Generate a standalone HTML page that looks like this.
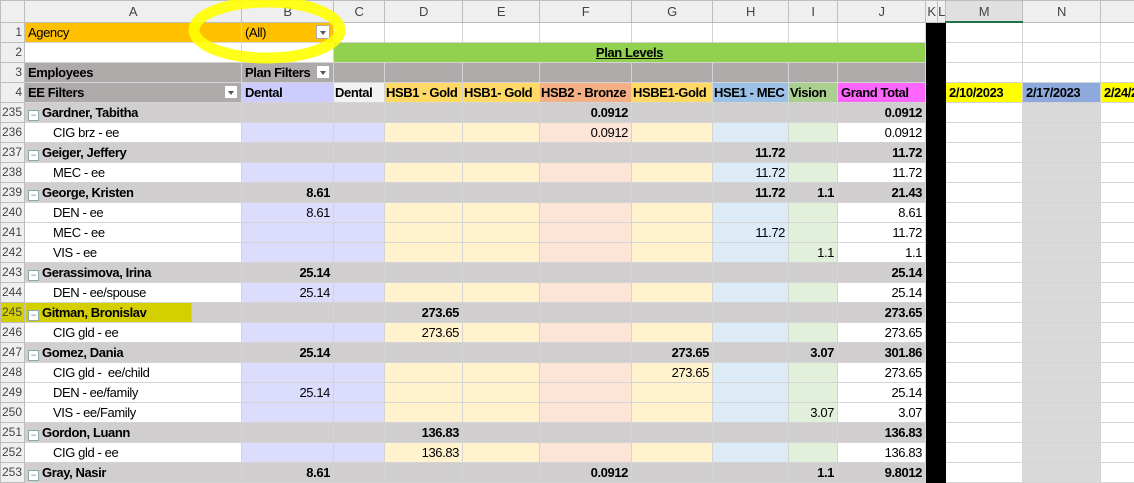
<!DOCTYPE html>
<html><head><meta charset="utf-8"><style>
body{margin:0;width:1134px;height:478px;overflow:hidden;background:#fff;font-family:"Liberation Sans",Arial,sans-serif;font-size:13px;letter-spacing:-0.4px;color:#000;position:relative}
table{border-collapse:collapse;table-layout:fixed;width:1160px;position:absolute;left:0;top:0}
td{border:1px solid #d4d4d4;height:19px;padding:0 3px;white-space:nowrap;overflow:hidden;text-align:right;line-height:19px}
tr.h td{background:#efefef;color:#444;text-align:center;height:20px;font-weight:normal;border-color:#bdbdbd}
td.rh{background:#efefef;color:#444;text-align:right;padding:0 2px 0 0;font-size:12px;border-color:#bdbdbd;letter-spacing:0}
.b{font-weight:bold}
.l{text-align:left}
.c{text-align:center}
tr.g td{background:#d0cece;font-weight:bold}
tr.g td.rh{background:#efefef;font-weight:normal}
tr.g td.w{background:#fff}
tr.g td.n,td.n{background:#d9d9d9}
td.lv{background:#dcdcfc}td.yl{background:#fff2cc}td.pc{background:#fce4d6}td.bu{background:#ddebf7}td.gr{background:#e2efda}
td.K{background:#000!important;border-color:#000}
.m{display:inline-block;width:9px;height:9px;border:1px solid #8aa;background:#fff;font-size:9px;line-height:8px;text-align:center;color:#567;margin-right:3px;vertical-align:-1px;font-weight:normal;letter-spacing:0}
.dd{position:absolute;width:14px;height:14px;background:#fff;border:1px solid #aaa;box-sizing:border-box}
.dd:after{content:"";position:absolute;left:3px;top:5px;border:3px solid transparent;border-top:4px solid #555}
</style></head><body>
<table>
<colgroup><col style="width:24px"><col style="width:217px"><col style="width:92px"><col style="width:51px"><col style="width:78px"><col style="width:77px"><col style="width:92px"><col style="width:81px"><col style="width:76px"><col style="width:49px"><col style="width:88px"><col style="width:12px"><col style="width:8px"><col style="width:77px"><col style="width:78px"><col style="width:60px"></colgroup>
<tr class="h"><td></td><td>A</td><td>B</td><td>C</td><td>D</td><td>E</td><td>F</td><td>G</td><td>H</td><td>I</td><td>J</td><td style="padding:0">K</td><td style="padding:0">L</td><td style="border-bottom:2px solid #217346;background:#e0e0e0">M</td><td>N</td><td></td></tr>
<tr><td class="rh">1</td><td class="l" style="background:#ffc000">Agency</td><td class="l" style="background:#ffc000">(All)</td><td></td><td></td><td></td><td></td><td></td><td></td><td></td><td></td><td class="K"></td><td class="K"></td><td></td><td></td><td></td></tr>
<tr><td class="rh">2</td><td></td><td></td><td colspan="8" class="c b" style="background:#92d050;text-decoration:underline">Plan Levels</td><td class="K"></td><td class="K"></td><td></td><td></td><td></td></tr>
<tr><td class="rh">3</td><td class="l b" style="background:#aeaaaa">Employees</td><td class="l b" style="background:#aeaaaa">Plan Filters</td><td style="background:#aeaaaa"></td><td style="background:#aeaaaa"></td><td style="background:#aeaaaa"></td><td style="background:#aeaaaa"></td><td style="background:#aeaaaa"></td><td style="background:#aeaaaa"></td><td style="background:#aeaaaa"></td><td style="background:#aeaaaa"></td><td class="K"></td><td class="K"></td><td></td><td></td><td></td></tr>
<tr class="b"><td class="rh" style="font-weight:normal">4</td><td class="l" style="background:#aeaaaa">EE Filters</td><td class="l" style="background:#ccccff">Dental</td><td class="l" style="background:#f2f2f2;padding:0 1px">Dental</td><td class="l" style="background:#ffd966;padding:0 1px">HSB1 - Gold</td><td class="l" style="background:#ffd966;padding:0 1px">HSB1- Gold</td><td class="l" style="background:#f4b084;padding:0 1px">HSB2 - Bronze</td><td class="l" style="background:#ffd966;padding:0 1px">HSBE1-Gold</td><td class="l" style="background:#9bc2e6;padding:0 1px">HSE1 - MEC</td><td class="l" style="background:#a9d08e;padding:0 1px">Vision</td><td class="l" style="background:#ff66ff">Grand Total</td><td class="K"></td><td class="K"></td><td class="l" style="background:#ffff00">2/10/2023</td><td class="l" style="background:#8ea9db">2/17/2023</td><td class="l" style="background:#ffff00">2/24/2023</td></tr>

<tr class="g"><td class="rh">235</td><td class="l"><span class="m">−</span>Gardner, Tabitha</td><td></td><td></td><td></td><td></td><td>0.0912</td><td></td><td></td><td></td><td>0.0912</td><td class="K"></td><td class="K"></td><td class="w"></td><td class="n"></td><td class="w"></td></tr>
<tr><td class="rh">236</td><td class="l" style="padding-left:28px">CIG brz - ee</td><td class="lv"></td><td class="lv"></td><td class="yl"></td><td class="yl"></td><td class="pc">0.0912</td><td class="yl"></td><td class="bu"></td><td class="gr"></td><td>0.0912</td><td class="K"></td><td class="K"></td><td></td><td class="n"></td><td></td></tr>
<tr class="g"><td class="rh">237</td><td class="l"><span class="m">−</span>Geiger, Jeffery</td><td></td><td></td><td></td><td></td><td></td><td></td><td>11.72</td><td></td><td>11.72</td><td class="K"></td><td class="K"></td><td class="w"></td><td class="n"></td><td class="w"></td></tr>
<tr><td class="rh">238</td><td class="l" style="padding-left:28px">MEC - ee</td><td class="lv"></td><td class="lv"></td><td class="yl"></td><td class="yl"></td><td class="pc"></td><td class="yl"></td><td class="bu">11.72</td><td class="gr"></td><td>11.72</td><td class="K"></td><td class="K"></td><td></td><td class="n"></td><td></td></tr>
<tr class="g"><td class="rh">239</td><td class="l"><span class="m">−</span>George, Kristen</td><td>8.61</td><td></td><td></td><td></td><td></td><td></td><td>11.72</td><td>1.1</td><td>21.43</td><td class="K"></td><td class="K"></td><td class="w"></td><td class="n"></td><td class="w"></td></tr>
<tr><td class="rh">240</td><td class="l" style="padding-left:28px">DEN - ee</td><td class="lv">8.61</td><td class="lv"></td><td class="yl"></td><td class="yl"></td><td class="pc"></td><td class="yl"></td><td class="bu"></td><td class="gr"></td><td>8.61</td><td class="K"></td><td class="K"></td><td></td><td class="n"></td><td></td></tr>
<tr><td class="rh">241</td><td class="l" style="padding-left:28px">MEC - ee</td><td class="lv"></td><td class="lv"></td><td class="yl"></td><td class="yl"></td><td class="pc"></td><td class="yl"></td><td class="bu">11.72</td><td class="gr"></td><td>11.72</td><td class="K"></td><td class="K"></td><td></td><td class="n"></td><td></td></tr>
<tr><td class="rh">242</td><td class="l" style="padding-left:28px">VIS - ee</td><td class="lv"></td><td class="lv"></td><td class="yl"></td><td class="yl"></td><td class="pc"></td><td class="yl"></td><td class="bu"></td><td class="gr">1.1</td><td>1.1</td><td class="K"></td><td class="K"></td><td></td><td class="n"></td><td></td></tr>
<tr class="g"><td class="rh">243</td><td class="l"><span class="m">−</span>Gerassimova, Irina</td><td>25.14</td><td></td><td></td><td></td><td></td><td></td><td></td><td></td><td>25.14</td><td class="K"></td><td class="K"></td><td class="w"></td><td class="n"></td><td class="w"></td></tr>
<tr><td class="rh">244</td><td class="l" style="padding-left:28px">DEN - ee/spouse</td><td class="lv">25.14</td><td class="lv"></td><td class="yl"></td><td class="yl"></td><td class="pc"></td><td class="yl"></td><td class="bu"></td><td class="gr"></td><td>25.14</td><td class="K"></td><td class="K"></td><td></td><td class="n"></td><td></td></tr>
<tr class="g"><td class="rh" style="background:#d4d000!important">245</td><td class="l" style="background:linear-gradient(90deg,#d4d000 0,#d4d000 166px,#d0cece 166px)"><span class="m">−</span>Gitman, Bronislav</td><td></td><td></td><td>273.65</td><td></td><td></td><td></td><td></td><td></td><td>273.65</td><td class="K"></td><td class="K"></td><td class="w"></td><td class="n"></td><td class="w"></td></tr>
<tr><td class="rh">246</td><td class="l" style="padding-left:28px">CIG gld - ee</td><td class="lv"></td><td class="lv"></td><td class="yl">273.65</td><td class="yl"></td><td class="pc"></td><td class="yl"></td><td class="bu"></td><td class="gr"></td><td>273.65</td><td class="K"></td><td class="K"></td><td></td><td class="n"></td><td></td></tr>
<tr class="g"><td class="rh">247</td><td class="l"><span class="m">−</span>Gomez, Dania</td><td>25.14</td><td></td><td></td><td></td><td></td><td>273.65</td><td></td><td>3.07</td><td>301.86</td><td class="K"></td><td class="K"></td><td class="w"></td><td class="n"></td><td class="w"></td></tr>
<tr><td class="rh">248</td><td class="l" style="padding-left:28px">CIG gld -&nbsp; ee/child</td><td class="lv"></td><td class="lv"></td><td class="yl"></td><td class="yl"></td><td class="pc"></td><td class="yl">273.65</td><td class="bu"></td><td class="gr"></td><td>273.65</td><td class="K"></td><td class="K"></td><td></td><td class="n"></td><td></td></tr>
<tr><td class="rh">249</td><td class="l" style="padding-left:28px">DEN - ee/family</td><td class="lv">25.14</td><td class="lv"></td><td class="yl"></td><td class="yl"></td><td class="pc"></td><td class="yl"></td><td class="bu"></td><td class="gr"></td><td>25.14</td><td class="K"></td><td class="K"></td><td></td><td class="n"></td><td></td></tr>
<tr><td class="rh">250</td><td class="l" style="padding-left:28px">VIS - ee/Family</td><td class="lv"></td><td class="lv"></td><td class="yl"></td><td class="yl"></td><td class="pc"></td><td class="yl"></td><td class="bu"></td><td class="gr">3.07</td><td>3.07</td><td class="K"></td><td class="K"></td><td></td><td class="n"></td><td></td></tr>
<tr class="g"><td class="rh">251</td><td class="l"><span class="m">−</span>Gordon, Luann</td><td></td><td></td><td>136.83</td><td></td><td></td><td></td><td></td><td></td><td>136.83</td><td class="K"></td><td class="K"></td><td class="w"></td><td class="n"></td><td class="w"></td></tr>
<tr><td class="rh">252</td><td class="l" style="padding-left:28px">CIG gld - ee</td><td class="lv"></td><td class="lv"></td><td class="yl">136.83</td><td class="yl"></td><td class="pc"></td><td class="yl"></td><td class="bu"></td><td class="gr"></td><td>136.83</td><td class="K"></td><td class="K"></td><td></td><td class="n"></td><td></td></tr>
<tr class="g"><td class="rh">253</td><td class="l"><span class="m">−</span>Gray, Nasir</td><td>8.61</td><td></td><td></td><td></td><td>0.0912</td><td></td><td></td><td>1.1</td><td>9.8012</td><td class="K"></td><td class="K"></td><td class="w"></td><td class="n"></td><td class="w"></td></tr>
</table>
<div class="dd" style="left:316px;top:25px"></div>
<div class="dd" style="left:316px;top:65px"></div>
<div class="dd" style="left:224px;top:85px"></div>
<svg style="position:absolute;left:185px;top:0" width="165" height="70"><ellipse cx="82" cy="30" rx="73" ry="28" fill="none" stroke="#ffff00" stroke-width="11" opacity="0.9"/></svg>
</body></html>
